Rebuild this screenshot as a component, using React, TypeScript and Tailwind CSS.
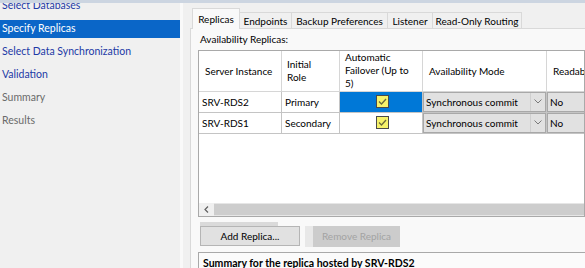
import React from 'react';

const navItems = [
  { label: 'Select Databases', tone: 'link' },
  { label: 'Specify Replicas', tone: 'active' },
  { label: 'Select Data Synchronization', tone: 'link' },
  { label: 'Validation', tone: 'link' },
  { label: 'Summary', tone: 'muted' },
  { label: 'Results', tone: 'muted' },
];

const tabs = [
  { label: 'Replicas', w: 'w-[48px]' },
  { label: 'Endpoints', w: 'w-[52px]' },
  { label: 'Backup Preferences', w: 'w-[96px]' },
  { label: 'Listener', w: 'w-[45px]' },
  { label: 'Read-Only Routing', w: 'w-[89px]' },
];

const rows = [
  { server: 'SRV-RDS2', role: 'Primary', selected: true },
  { server: 'SRV-RDS1', role: 'Secondary', selected: false },
];

function CheckBox() {
  return (
    <svg width="13" height="13" viewBox="0 0 13 13">
      <rect x="0.5" y="0.5" width="12" height="12" fill="#f6f26a" stroke="#4a4a4a" />
      <path d="M3 6.5 L5.5 9 L10 4" fill="none" stroke="#6b6b3a" strokeWidth="1.3" />
    </svg>
  );
}

function Combo({ text, arrow }: { text: string; arrow?: boolean }) {
  return (
    <div className="flex h-full items-stretch border border-[#a8a8a8] bg-[#e1e1e1]">
      <div className="flex flex-1 items-center pl-[2px] text-black">{text}</div>
      {arrow && (
        <div className="flex w-[15px] items-center justify-center border-l border-[#cfcfcf]">
          <svg width="8" height="5" viewBox="0 0 8 5">
            <path d="M0.5 0.5 L4 4 L7.5 0.5" fill="none" stroke="#7a7a7a" strokeWidth="1" />
          </svg>
        </div>
      )}
    </div>
  );
}

export default function App() {
  return (
    <div className="flex h-[268px] w-[585px] flex-col overflow-hidden bg-[#f0f0f0] font-['Lato','Liberation_Sans',sans-serif] text-[10px] leading-none">
      <div className="h-[3px] shrink-0 bg-[#ccd5e1]" />
      <div className="flex min-h-0 flex-1">
        {/* wizard steps */}
        <nav className="w-[180px] shrink-0 overflow-hidden text-[10.5px]">
          <div className="mt-[-9px]">
            {navItems.map((item) => (
              <div key={item.label} className="flex h-[23px] items-center">
                <div
                  className={`flex h-[18px] w-full items-center pl-[2px] ${
                    item.tone === 'active'
                      ? 'bg-[#0a66c8] text-white'
                      : item.tone === 'link'
                      ? 'text-[#1d3aa6]'
                      : 'text-[#6a6a6a]'
                  }`}
                >
                  {item.label}
                </div>
              </div>
            ))}
          </div>
        </nav>
        <div className="w-[3px] shrink-0 bg-[#f9f9f9]" />

        {/* tab control */}
        <div className="ml-[7px] flex min-w-0 flex-1 flex-col pt-[6px]">
          <div className="flex h-[19px] items-end pl-[2px]">
            {tabs.map((tab, i) =>
              i === 0 ? (
                <div
                  key={tab.label}
                  className={`relative z-10 mb-[-1px] flex h-[21px] shrink-0 items-center justify-center border border-b-0 border-[#d9d9d9] bg-[#f9f9f9] text-black ${tab.w}`}
                >
                  {tab.label}
                </div>
              ) : (
                <div
                  key={tab.label}
                  className={`flex h-[16px] shrink-0 items-center justify-center border border-b-0 border-l-0 border-[#d9d9d9] bg-[#f0f0f0] text-black ${tab.w}`}
                >
                  {tab.label}
                </div>
              )
            )}
          </div>
          <div className="flex min-h-0 flex-1 flex-col border-l border-t border-[#d9d9d9] bg-[#f9f9f9] pl-[7px]">
            <div className="flex h-[21px] items-center pl-[2px] text-black">Availability Replicas:</div>

            {/* grid */}
            <div className="flex h-[168px] w-[387px] flex-col overflow-hidden border border-[#a9a9a9] bg-white">
              <div className="flex-1 overflow-hidden">
                <div className="grid w-[420px] grid-cols-[83px_58px_83px_124px_72px] text-black">
                  <div className="flex h-[41px] items-center border-b border-r border-[#d6d6d6] pl-[6px]">Server Instance</div>
                  <div className="flex h-[41px] items-center border-b border-r border-[#d6d6d6] pl-[5px] leading-[13px]">
                    Initial
                    <br />
                    Role
                  </div>
                  <div className="flex h-[41px] items-center border-b border-r border-[#d6d6d6] pl-[5px] leading-[13px]">
                    Automatic
                    <br />
                    Failover (Up to
                    <br />5)
                  </div>
                  <div className="flex h-[41px] items-center border-b border-r border-[#d6d6d6] pl-[6px]">Availability Mode</div>
                  <div className="flex h-[41px] items-center whitespace-nowrap border-b border-[#d6d6d6] pl-[6px]">Readable Secondary</div>

                  {rows.map((r) => (
                    <React.Fragment key={r.server}>
                      <div className="flex h-[21px] items-center border-b border-r border-[#c4c4c4] pl-[3px]">{r.server}</div>
                      <div className="flex h-[21px] items-center border-b border-r border-[#c4c4c4] pl-[3px]">{r.role}</div>
                      <div
                        className={`flex h-[21px] items-center justify-center border-b border-r border-[#c4c4c4] pl-[2px] ${
                          r.selected ? 'bg-[#0078d7]' : ''
                        }`}
                      >
                        <CheckBox />
                      </div>
                      <div className="h-[21px] border-b border-r border-[#c4c4c4]">
                        <Combo text="Synchronous commit" arrow />
                      </div>
                      <div className="h-[21px] border-b border-[#c4c4c4]">
                        <Combo text="No" />
                      </div>
                    </React.Fragment>
                  ))}
                </div>
              </div>
              {/* horizontal scrollbar */}
              <div className="flex h-[13px] shrink-0 bg-[#e6e6e6]">
                <div className="flex w-[15px] items-center justify-center bg-[#f0f0f0]">
                  <svg width="5" height="7" viewBox="0 0 5 7">
                    <path d="M4 0.5 L1 3.5 L4 6.5" fill="none" stroke="#606060" strokeWidth="1.2" />
                  </svg>
                </div>
                <div className="my-[1px] flex-1 bg-[#cdcdcd]" />
              </div>
            </div>

            {/* buttons */}
            <div className="flex h-[35px] shrink-0 items-start gap-[5px] pl-[2px] pt-[5px]">
              <div className="flex w-[100px] flex-col">
                <div className="h-[4px] w-[78px] bg-[#dadada]" />
                <div className="flex h-[20px] items-center justify-center border border-[#b5b5b5] bg-[#e1e1e1] text-black">
                  Add Replica...
                </div>
              </div>
              <div className="mt-[4px] flex h-[21px] w-[95px] items-stretch bg-[#e8e8e8] pl-[8px]">
                <div className="flex flex-1 items-center justify-center bg-[#cccccc] text-[#a3a3a3]">Remove Replica</div>
              </div>
            </div>

            {/* summary */}
            <div className="flex-1 border-l border-t border-[#a9a9a9] bg-[#fbfbfb] pl-[4px] pt-[5px] text-[10.5px] font-bold text-black">
              Summary for the replica hosted by SRV-RDS2
            </div>
          </div>
        </div>
      </div>
    </div>
  );
}
